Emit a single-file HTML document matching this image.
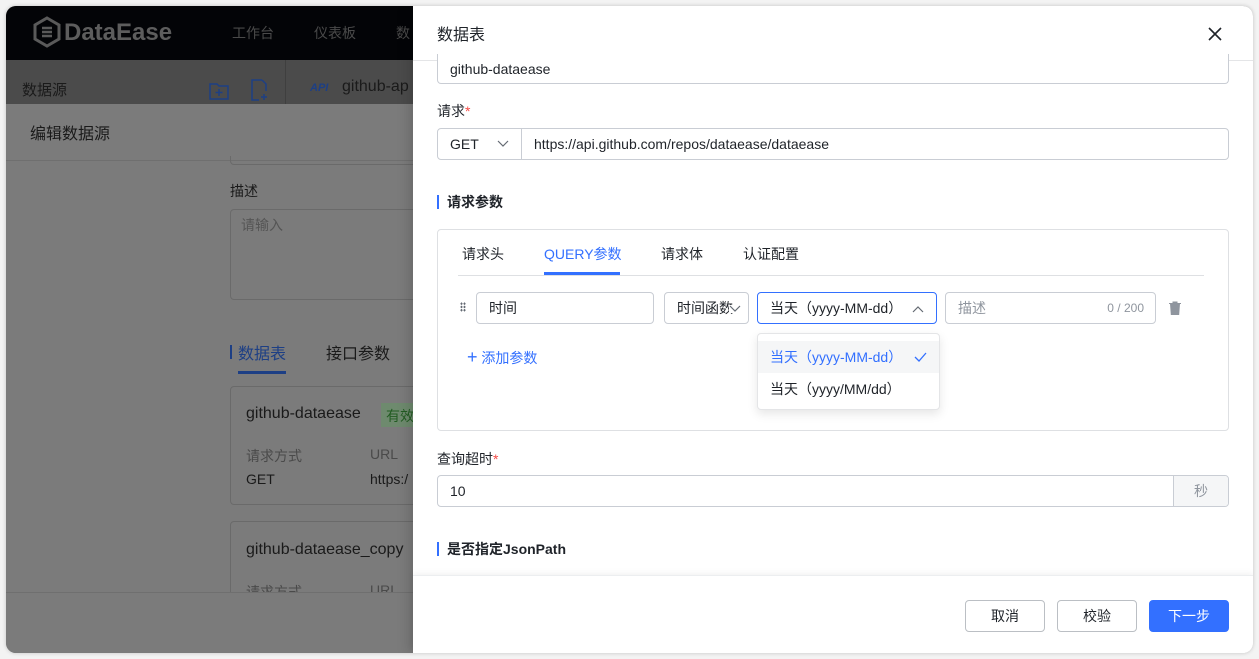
<!DOCTYPE html>
<html><head><meta charset="utf-8">
<style>
*{box-sizing:border-box;margin:0;padding:0}
body{width:1259px;height:659px;background:#f3f3f3;font-family:"Liberation Sans","Noto Sans CJK SC",sans-serif;font-size:14px;color:#1f2329;position:relative;overflow:hidden}
.win{position:absolute;left:6px;top:6px;width:1247px;height:647px;border-radius:10px;overflow:hidden;background:#7b7b7b;box-shadow:0 0 4px rgba(0,0,0,.2)}
.a{position:absolute}
.bg{color:#1a1a1a}
.inp{position:absolute;border:1px solid #c9cdd4;border-radius:4px;background:#fff;font-size:14px;padding-left:12px;display:flex;align-items:center}
.lbl{position:absolute;font-size:14px;color:#1f2329}
.req{color:#f54a45}
.sec{position:absolute;font-size:14px;font-weight:bold;color:#1f2329;padding-left:8px;border-left:2px solid #3370ff;line-height:14px}
.btn{position:absolute;border:1px solid #bbbfc4;border-radius:4px;background:#fff;font-size:14px;display:flex;align-items:center;justify-content:center}
</style></head><body>
<div class="win">
  <div class="a" style="left:0;top:0;width:407px;height:54px;background:#030407"></div>
  <svg class="a" style="left:26px;top:10px" width="30" height="32" viewBox="0 0 30 32"><path d="M15 2 L27 9 L27 23 L15 30 L3 23 L3 9 Z" fill="none" stroke="#5a5a5a" stroke-width="3"/><path d="M10 12h10M10 16h10M10 20h10" stroke="#5a5a5a" stroke-width="2.5"/></svg>
  <div class="a" style="left:58px;top:13px;font-size:24px;font-weight:bold;color:#5d5d5d">DataEase</div>
  <div class="a" style="left:226px;top:17px;font-size:14px;color:#4a4a4a">工作台</div>
  <div class="a" style="left:308px;top:17px;font-size:14px;color:#4a4a4a">仪表板</div>
  <div class="a" style="left:390px;top:17px;font-size:14px;color:#4a4a4a">数</div>
  <div class="a" style="left:0;top:54px;width:407px;height:44px;background:#4b4b4b"></div>
  <div class="a" style="left:279px;top:54px;width:1px;height:44px;background:#3f3f3f"></div>
  <div class="a bg" style="left:16px;top:73px;font-size:15px">数据源</div>
  <svg class="a" style="left:203px;top:76px" width="20" height="18" viewBox="0 0 20 18"><path d="M1 2h7l2 2h9v13H1z" fill="none" stroke="#1d3f85" stroke-width="1.5"/><path d="M10 7v7M6.5 10.5h7" stroke="#1d3f85" stroke-width="1.5"/></svg>
  <svg class="a" style="left:244px;top:73px" width="18" height="22" viewBox="0 0 18 22"><path d="M12 1H2v20h7M12 1l4 4v7" fill="none" stroke="#1d3f85" stroke-width="1.5"/><path d="M14 15v6M11 18h6" stroke="#1d3f85" stroke-width="1.5"/></svg>
  <div class="a" style="left:304px;top:76px;font-size:11px;font-weight:bold;font-style:italic;color:#1d3f85">API</div>
  <div class="a bg" style="left:336px;top:72px;font-size:16px">github-ap</div>
  <div class="a bg" style="left:24px;top:114px;font-size:16px">编辑数据源</div>
  <div class="a" style="left:0;top:154px;width:407px;height:1px;background:#6f6f6f"></div>
  <div class="a" style="left:224px;top:150px;width:190px;height:9px;border:1px solid #6a6a6a;border-top:none;border-radius:0 0 4px 4px"></div>
  <div class="a bg" style="left:224px;top:175px">描述</div>
  <div class="a" style="left:224px;top:203px;width:190px;height:91px;border:1px solid #6a6a6a;border-radius:4px"></div>
  <div class="a" style="left:235px;top:209px;color:#555">请输入</div>
  <div class="a" style="left:224px;top:339px;width:2px;height:14px;background:#1d3f85"></div>
  <div class="a" style="left:232px;top:334px;font-size:16px;color:#1d3f85">数据表</div>
  <div class="a" style="left:232px;top:365px;width:48px;height:3px;background:#1d3f85"></div>
  <div class="a bg" style="left:320px;top:334px;font-size:16px">接口参数</div>
  <div class="a" style="left:224px;top:380px;width:190px;height:119px;border:1px solid #6a6a6a;border-radius:4px"></div>
  <div class="a bg" style="left:240px;top:399px;font-size:16px">github-dataease</div>
  <div class="a" style="left:375px;top:397px;width:40px;height:24px;background:#6e8a6e;color:#225c22;font-size:14px;padding:3px 5px">有效</div>
  <div class="a" style="left:240px;top:440px;color:#4a4a4a">请求方式</div>
  <div class="a" style="left:364px;top:440px;color:#4a4a4a">URL</div>
  <div class="a bg" style="left:240px;top:465px">GET</div>
  <div class="a bg" style="left:364px;top:465px">https:/</div>
  <div class="a" style="left:224px;top:515px;width:190px;height:80px;border:1px solid #6a6a6a;border-radius:4px"></div>
  <div class="a bg" style="left:240px;top:535px;font-size:16px">github-dataease_copy</div>
  <div class="a" style="left:240px;top:576px;height:11px;overflow:hidden;color:#4a4a4a">请求方式</div>
  <div class="a" style="left:364px;top:576px;height:11px;overflow:hidden;color:#4a4a4a">URL</div>
  <div class="a" style="left:0;top:586px;width:407px;height:61px;background:#7b7b7b;border-top:1px solid #6f6f6f"></div>

  <div class="a" style="left:407px;top:0;width:840px;height:647px;background:#fff;box-shadow:-4px 0 12px rgba(0,0,0,.15)">
    <div class="a" style="left:24px;top:15px;font-size:16px">数据表</div>
    <svg class="a" style="left:794px;top:20px" width="16" height="16" viewBox="0 0 16 16"><path d="M2 2l12 12M14 2L2 14" stroke="#1f2329" stroke-width="1.6"/></svg>
    <div class="a" style="left:0;top:54px;width:840px;height:1px;background:#e4e5e7"></div>
    <div class="inp" style="left:24px;top:48px;width:792px;height:30px;border-top:none;border-radius:0 0 4px 4px">github-dataease</div>
    <div class="lbl" style="left:24px;top:95px">请求<span class="req">*</span></div>
    <div class="inp" style="left:24px;top:122px;width:792px;height:32px;padding:0">
      <div style="width:84px;height:100%;border-right:1px solid #c9cdd4;display:flex;align-items:center;padding-left:12px">GET<svg style="margin-left:18px" width="12" height="8" viewBox="0 0 12 8"><path d="M1 1l5 5 5-5" fill="none" stroke="#646a73" stroke-width="1.2"/></svg></div>
      <div style="padding-left:12px">https://api.github.com/repos/dataease/dataease</div>
    </div>
    <div class="sec" style="left:24px;top:189px">请求参数</div>
    <div class="a" style="left:24px;top:223px;width:792px;height:202px;border:1px solid #dee0e3;border-radius:4px"></div>
    <div class="a" style="left:49px;top:238px">请求头</div>
    <div class="a" style="left:131px;top:238px;color:#3370ff">QUERY参数</div>
    <div class="a" style="left:131px;top:266px;width:76px;height:3px;background:#3370ff"></div>
    <div class="a" style="left:248px;top:238px">请求体</div>
    <div class="a" style="left:330px;top:238px">认证配置</div>
    <div class="a" style="left:45px;top:269px;width:746px;height:1px;background:#dee0e3"></div>
    <div class="a" style="left:47px;top:296px;width:6px;height:10px;background:radial-gradient(circle,#646a73 1px,transparent 1.2px) 0 0/3px 3.3px"></div>
    <div class="inp" style="left:63px;top:286px;width:178px;height:32px">时间</div>
    <div class="inp" style="left:251px;top:286px;width:85px;height:32px;overflow:hidden;white-space:nowrap">时间函数<svg style="position:absolute;right:7px;top:12px;background:#fff" width="12" height="8" viewBox="0 0 12 8"><path d="M1 1l5 5 5-5" fill="none" stroke="#646a73" stroke-width="1.2"/></svg></div>
    <div class="inp" style="left:344px;top:286px;width:180px;height:32px;border-color:#3370ff">当天（yyyy-MM-dd）<svg style="position:absolute;right:12px;top:12px" width="12" height="8" viewBox="0 0 12 8"><path d="M1 7l5-5 5 5" fill="none" stroke="#646a73" stroke-width="1.2"/></svg></div>
    <div class="inp" style="left:532px;top:286px;width:211px;height:32px;color:#8f959e">描述<span style="position:absolute;right:11px;font-size:12px">0 / 200</span></div>
    <svg class="a" style="left:756px;top:295px" width="12" height="14" viewBox="0 0 12 14"><path d="M0 2.5h12M4 2.5V1h4v1.5M1.5 2.5l.8 11h7.4l.8-11" fill="#8f959e" stroke="#8f959e" stroke-width="1"/></svg>
    <div class="a" style="left:54px;top:342px;color:#3370ff"><span style="font-size:18px;line-height:14px">+</span> 添加参数</div>
    <div class="a" style="left:344px;top:327px;width:183px;height:77px;background:#fff;border:1px solid #e4e5e7;border-radius:4px;box-shadow:0 4px 10px rgba(0,0,0,.1)">
      <div style="position:absolute;left:0;top:7px;width:181px;height:32px;background:#f5f6f7;color:#3370ff;padding:6px 12px">当天（yyyy-MM-dd）<svg style="position:absolute;right:12px;top:11px" width="13" height="10" viewBox="0 0 13 10"><path d="M1 5l4 4 7-8" fill="none" stroke="#3370ff" stroke-width="1.3"/></svg></div>
      <div style="position:absolute;left:0;top:39px;padding:6px 12px">当天（yyyy/MM/dd）</div>
    </div>
    <div class="lbl" style="left:24px;top:443px">查询超时<span class="req">*</span></div>
    <div class="inp" style="left:24px;top:469px;width:792px;height:32px;padding-left:0;overflow:hidden">
      <span style="padding-left:12px;flex:1">10</span>
      <div style="width:55px;height:100%;background:#f5f6f7;border-left:1px solid #c9cdd4;display:flex;align-items:center;justify-content:center;color:#8f959e">秒</div>
    </div>
    <div class="sec" style="left:24px;top:536px">是否指定JsonPath</div>
    <div class="a" style="left:0;top:569px;width:840px;height:78px;background:#fff;box-shadow:0 -2px 6px rgba(0,0,0,.05);border-top:1px solid #eceef0"></div>
    <div class="btn" style="left:552px;top:594px;width:80px;height:32px">取消</div>
    <div class="btn" style="left:644px;top:594px;width:80px;height:32px">校验</div>
    <div class="btn" style="left:736px;top:594px;width:80px;height:32px;background:#3370ff;border-color:#3370ff;color:#fff">下一步</div>
  </div>
</div>
</body></html>
